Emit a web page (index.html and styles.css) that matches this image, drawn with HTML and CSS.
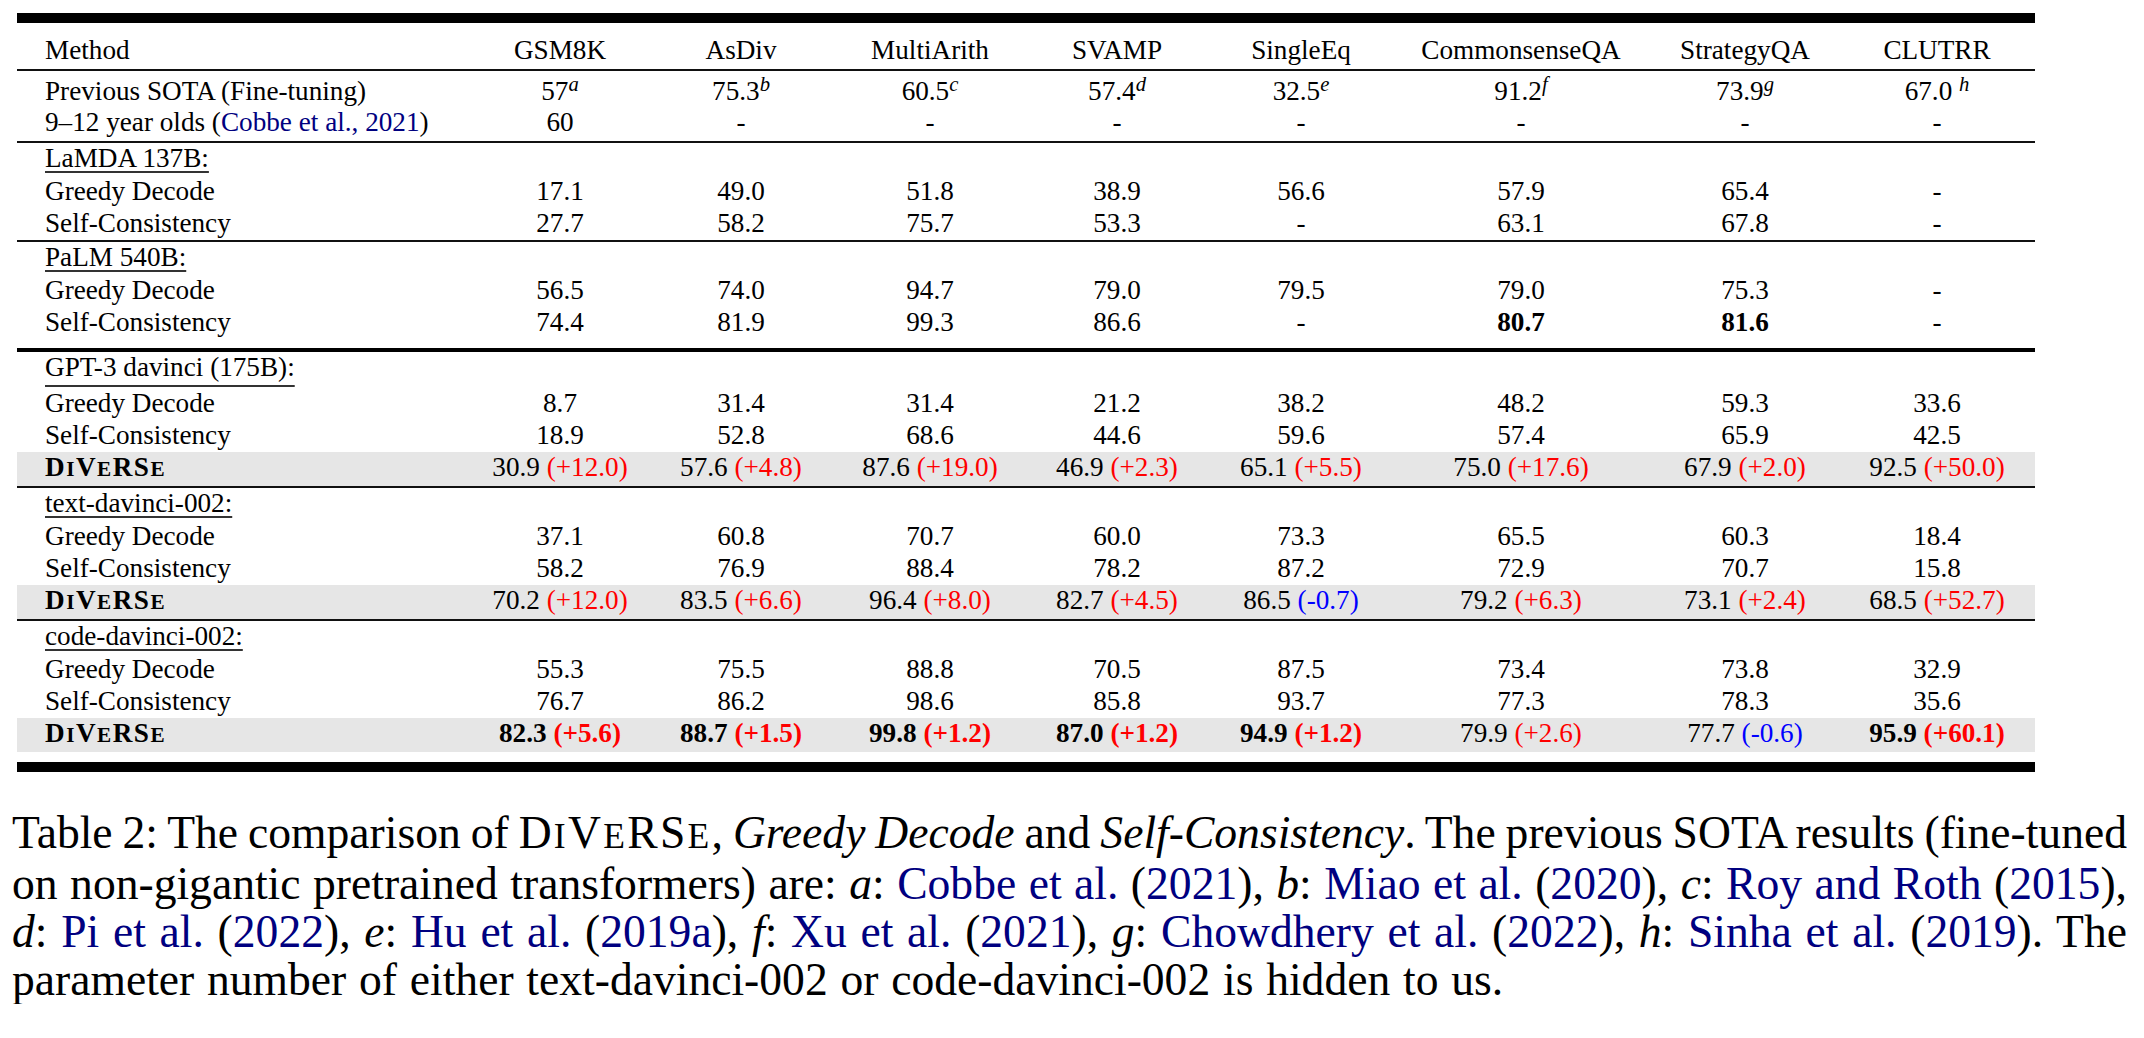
FILE: index.html
```html
<!DOCTYPE html>
<html lang="en">
<head>
<meta charset="utf-8">
<title>Table 2</title>
<link rel="stylesheet" href="styles.css">
</head>
<body>
<figure class="fig">
  <table class="tbl">
    <colgroup>
      <col class="w-method">
      <col class="w-gsm">
      <col class="w-asdiv">
      <col class="w-multi">
      <col class="w-svamp">
      <col class="w-single">
      <col class="w-csqa">
      <col class="w-sqa">
      <col class="w-clutrr">
    </colgroup>
    <thead>
      <tr class="hdr">
        <th>Method</th><th>GSM8K</th><th>AsDiv</th><th>MultiArith</th><th>SVAMP</th><th>SingleEq</th><th>CommonsenseQA</th><th>StrategyQA</th><th>CLUTRR</th>
      </tr>
    </thead>
    <tbody>
      <tr class="r-first">
        <td>Previous SOTA (Fine-tuning)</td>
        <td>57<sup class="m">a</sup></td>
        <td>75.3<sup class="m">b</sup></td>
        <td>60.5<sup class="m">c</sup></td>
        <td>57.4<sup class="m">d</sup></td>
        <td>32.5<sup class="m">e</sup></td>
        <td>91.2<sup class="m">f</sup></td>
        <td>73.9<sup class="m">g</sup></td>
        <td>67.0 <sup class="m">h</sup></td>
      </tr>
      <tr class="r-kids">
        <td>9–12 year olds (<span class="cite">Cobbe et al., 2021</span>)</td>
        <td>60</td><td>-</td><td>-</td><td>-</td><td>-</td><td>-</td><td>-</td><td>-</td>
      </tr>
    </tbody>
    <tbody>
      <tr class="lbl"><td><span class="ul">LaMDA 137B:</span></td><td></td><td></td><td></td><td></td><td></td><td></td><td></td><td></td></tr>
      <tr class="row"><td>Greedy Decode</td><td>17.1</td><td>49.0</td><td>51.8</td><td>38.9</td><td>56.6</td><td>57.9</td><td>65.4</td><td>-</td></tr>
      <tr class="row end"><td>Self-Consistency</td><td>27.7</td><td>58.2</td><td>75.7</td><td>53.3</td><td>-</td><td>63.1</td><td>67.8</td><td>-</td></tr>
    </tbody>
    <tbody>
      <tr class="lbl"><td><span class="ul">PaLM 540B:</span></td><td></td><td></td><td></td><td></td><td></td><td></td><td></td><td></td></tr>
      <tr class="row"><td>Greedy Decode</td><td>56.5</td><td>74.0</td><td>94.7</td><td>79.0</td><td>79.5</td><td>79.0</td><td>75.3</td><td>-</td></tr>
      <tr class="row end-thick"><td>Self-Consistency</td><td>74.4</td><td>81.9</td><td>99.3</td><td>86.6</td><td>-</td><td><b>80.7</b></td><td><b>81.6</b></td><td>-</td></tr>
    </tbody>
    <tbody>
      <tr class="lbl lbl-deep"><td><span class="ul ul-deep">GPT-3 davinci (175B):</span></td><td></td><td></td><td></td><td></td><td></td><td></td><td></td><td></td></tr>
      <tr class="row"><td>Greedy Decode</td><td>8.7</td><td>31.4</td><td>31.4</td><td>21.2</td><td>38.2</td><td>48.2</td><td>59.3</td><td>33.6</td></tr>
      <tr class="row"><td>Self-Consistency</td><td>18.9</td><td>52.8</td><td>68.6</td><td>44.6</td><td>59.6</td><td>57.4</td><td>65.9</td><td>42.5</td></tr>
      <tr class="row ours end">
        <td><span class="name">D<span class="sm">I</span>V<span class="sm">E</span>RS<span class="sm">E</span></span></td>
        <td>30.9 <span class="up">(+12.0)</span></td>
        <td>57.6 <span class="up">(+4.8)</span></td>
        <td>87.6 <span class="up">(+19.0)</span></td>
        <td>46.9 <span class="up">(+2.3)</span></td>
        <td>65.1 <span class="up">(+5.5)</span></td>
        <td>75.0 <span class="up">(+17.6)</span></td>
        <td>67.9 <span class="up">(+2.0)</span></td>
        <td>92.5 <span class="up">(+50.0)</span></td>
      </tr>
    </tbody>
    <tbody>
      <tr class="lbl"><td><span class="ul">text-davinci-002:</span></td><td></td><td></td><td></td><td></td><td></td><td></td><td></td><td></td></tr>
      <tr class="row"><td>Greedy Decode</td><td>37.1</td><td>60.8</td><td>70.7</td><td>60.0</td><td>73.3</td><td>65.5</td><td>60.3</td><td>18.4</td></tr>
      <tr class="row"><td>Self-Consistency</td><td>58.2</td><td>76.9</td><td>88.4</td><td>78.2</td><td>87.2</td><td>72.9</td><td>70.7</td><td>15.8</td></tr>
      <tr class="row ours end">
        <td><span class="name">D<span class="sm">I</span>V<span class="sm">E</span>RS<span class="sm">E</span></span></td>
        <td>70.2 <span class="up">(+12.0)</span></td>
        <td>83.5 <span class="up">(+6.6)</span></td>
        <td>96.4 <span class="up">(+8.0)</span></td>
        <td>82.7 <span class="up">(+4.5)</span></td>
        <td>86.5 <span class="down">(-0.7)</span></td>
        <td>79.2 <span class="up">(+6.3)</span></td>
        <td>73.1 <span class="up">(+2.4)</span></td>
        <td>68.5 <span class="up">(+52.7)</span></td>
      </tr>
    </tbody>
    <tbody>
      <tr class="lbl"><td><span class="ul">code-davinci-002:</span></td><td></td><td></td><td></td><td></td><td></td><td></td><td></td><td></td></tr>
      <tr class="row"><td>Greedy Decode</td><td>55.3</td><td>75.5</td><td>88.8</td><td>70.5</td><td>87.5</td><td>73.4</td><td>73.8</td><td>32.9</td></tr>
      <tr class="row"><td>Self-Consistency</td><td>76.7</td><td>86.2</td><td>98.6</td><td>85.8</td><td>93.7</td><td>77.3</td><td>78.3</td><td>35.6</td></tr>
      <tr class="row ours">
        <td><span class="name">D<span class="sm">I</span>V<span class="sm">E</span>RS<span class="sm">E</span></span></td>
        <td><b>82.3 <span class="up">(+5.6)</span></b></td>
        <td><b>88.7 <span class="up">(+1.5)</span></b></td>
        <td><b>99.8 <span class="up">(+1.2)</span></b></td>
        <td><b>87.0 <span class="up">(+1.2)</span></b></td>
        <td><b>94.9 <span class="up">(+1.2)</span></b></td>
        <td>79.9 <span class="up">(+2.6)</span></td>
        <td>77.7 <span class="down">(-0.6)</span></td>
        <td><b>95.9 <span class="up">(+60.1)</span></b></td>
      </tr>
    </tbody>
  </table>
  <p class="caption">Table 2: The comparison of <span class="cap-name">D<span class="sm">I</span>V<span class="sm">E</span>RS<span class="sm">E</span></span>, <i>Greedy Decode</i> and <i>Self-Consistency</i>. The previous SOTA results <span class="nw">(fine-tuned</span> on non-gigantic pretrained transformers) are: <i>a</i>: <span class="cite">Cobbe et al.</span> (<span class="cite">2021</span>), <i>b</i>: <span class="cite">Miao et al.</span> (<span class="cite">2020</span>), <i>c</i>: <span class="cite">Roy and Roth</span> <span class="nw">(<span class="cite">2015</span>),</span> <span class="nw"><i>d</i>: <span class="cite">Pi</span></span> <span class="cite">et al.</span> (<span class="cite">2022</span>), <i>e</i>: <span class="cite">Hu et al.</span> (<span class="cite">2019a</span>), <i>f</i>: <span class="cite">Xu et al.</span> (<span class="cite">2021</span>), <i>g</i>: <span class="cite">Chowdhery et al.</span> (<span class="cite">2022</span>), <i>h</i>: <span class="cite">Sinha et al.</span> (<span class="cite">2019</span>). The <span class="tail">parameter number of either text-davinci-002 or code-davinci-002 is hidden to us.</span></p>
</figure>
</body>
</html>
```

FILE: styles.css
```css
html, body {
  margin: 0;
  padding: 0;
  background: #ffffff;
}

body {
  font-family: "Liberation Serif", "Times New Roman", serif;
  color: #000000;
}

.fig {
  margin: 0;
  padding: 13px 0 0 0;
}

/* ---------- table ---------- */
.tbl {
  margin-left: 17px;
  width: 2018px;
  table-layout: fixed;
  border-collapse: separate;
  border-spacing: 0;
  border-top: 10px solid #000;
  border-bottom: 10px solid #000;
  padding-bottom: 10px;
  font-size: 27.2px;
}

.w-method { width: 458px; }
.w-gsm    { width: 170px; }
.w-asdiv  { width: 192px; }
.w-multi  { width: 186px; }
.w-svamp  { width: 188px; }
.w-single { width: 180px; }
.w-csqa   { width: 260px; }
.w-sqa    { width: 188px; }
.w-clutrr { width: 196px; }

.tbl th,
.tbl td {
  padding: 0 0 1px 0;
  font-weight: normal;
  text-align: center;
  white-space: nowrap;
  line-height: 31px;
  vertical-align: top;
}

.tbl th:first-child,
.tbl td:first-child {
  text-align: left;
  padding-left: 28px;
}

.hdr th {
  padding-top: 12px;
  padding-bottom: 3px;
  border-bottom: 2px solid #111;
}

.r-first td {
  padding-top: 5px;
  padding-bottom: 0;
}

.r-kids td {
  padding-bottom: 3px;
  border-bottom: 2px solid #111;
}

.lbl td {
  padding-bottom: 2px;
}

.lbl-deep td {
  padding-bottom: 5px;
}

.row td {
  padding-bottom: 1px;
}

.end td {
  border-bottom: 2px solid #111;
}

.end-thick td {
  padding-bottom: 10px;
  border-bottom: 4px solid #000;
}

.ours td {
  background: #e6e6e6;
}

.ul {
  text-decoration: underline;
  text-decoration-thickness: 1.6px;
  text-underline-offset: 4px;
  text-decoration-skip-ink: none;
  text-decoration-color: #333;
}

.ul-deep {
  text-underline-offset: 9px;
}

.m {
  font-style: italic;
  font-size: 0.76em;
  line-height: 0;
  vertical-align: 0.42em;
}

.cite {
  color: #000080;
}

.up {
  color: #ff0000;
}

.down {
  color: #0000ff;
}

.name {
  font-weight: bold;
  letter-spacing: 1.5px;
}

.sm {
  font-size: 0.78em;
}

/* ---------- caption ---------- */
.caption {
  margin: 37px 0 0 12px;
  width: 2115px;
  font-size: 45.6px;
  line-height: 48px;
  text-align: justify;
  word-spacing: -0.03em;
}

.caption::first-line {
  word-spacing: -0.07em;
}

.nw {
  white-space: nowrap;
}

.tail {
  word-spacing: 0.03em;
}

.cap-name {
  letter-spacing: 0.05em;
}
```
